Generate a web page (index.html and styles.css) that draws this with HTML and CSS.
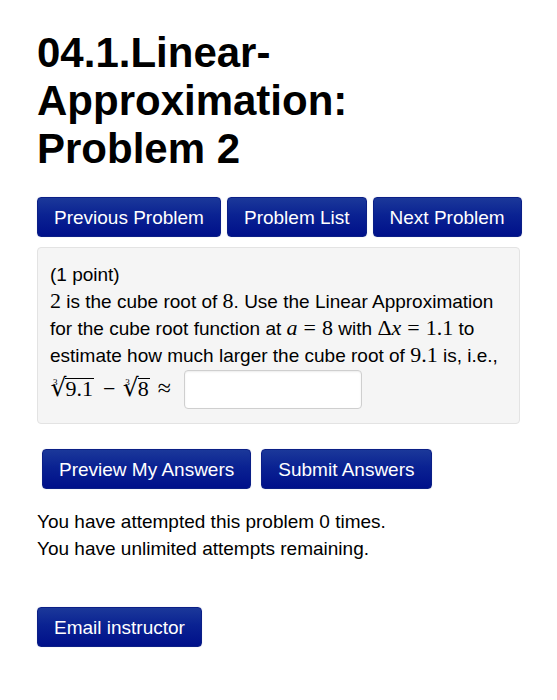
FILE: index.html
```html
<!DOCTYPE html>
<html lang="en">
<head>
<meta charset="utf-8">
<title>04.1.Linear-Approximation: Problem 2</title>
<link rel="stylesheet" href="styles.css">
</head>
<body>
<div class="page">
  <h1 class="title">04.1.Linear-Approximation: Problem 2</h1>

  <nav class="nav-row">
    <a class="btn" href="#">Previous Problem</a>
    <a class="btn" href="#">Problem List</a>
    <a class="btn" href="#">Next Problem</a>
  </nav>

  <div class="problem">
    (1 point)<br>
    <span class="m">2</span> is the cube root of <span class="m">8</span>. Use the Linear Approximation for the cube root function at <span class="m"><i>a</i><span class="rel">=</span>8</span> with <span class="m">Δ<i>x</i><span class="rel">=</span>1.1</span> to estimate how much larger the cube root of <span class="m">9.1</span> is, i.e.,<br>
    <span class="m expr"><span class="root"><span class="idx">3</span><span class="rsign">√</span><span class="rad">9.1</span></span><span class="op minus">−</span><span class="root"><span class="idx">3</span><span class="rsign">√</span><span class="rad">8</span></span><span class="op approx">≈</span></span><input class="answer" type="text" aria-label="answer">
  </div>

  <div class="submit-row">
    <button class="btn" type="button">Preview My Answers</button>
    <button class="btn" type="button">Submit Answers</button>
  </div>

  <p class="attempts">You have attempted this problem 0 times.<br>You have unlimited attempts remaining.</p>

  <div class="email-row">
    <button class="btn" type="button">Email instructor</button>
  </div>
</div>
</body>
</html>
```

FILE: styles.css
```css
html, body {
  margin: 0;
  padding: 0;
  background: #fff;
}

body {
  font-family: "Liberation Sans", Arial, Helvetica, sans-serif;
  color: #000;
  font-size: 19px;
  line-height: 27px;
}

.page {
  padding: 29px 37px 40px 37px;
}

.title {
  font-size: 42px;
  line-height: 48px;
  font-weight: bold;
  margin: 0 0 24px 0;
}

.btn {
  display: inline-flex;
  align-items: center;
  justify-content: center;
  box-sizing: border-box;
  height: 40px;
  padding: 0 16px;
  border: 1px solid #0b1f86;
  border-radius: 4px;
  background: linear-gradient(to bottom, #1b389a 0%, #0a2292 45%, #00108a 100%);
  color: #fff;
  font-family: "Liberation Sans", Arial, Helvetica, sans-serif;
  font-size: 19px;
  line-height: 1;
  text-decoration: none;
  white-space: nowrap;
  cursor: pointer;
  box-shadow: 0 0 1px rgba(0, 20, 120, 0.25);
}

.nav-row {
  display: flex;
  gap: 6px;
  margin-bottom: 10px;
}

.problem {
  background: #f5f5f5;
  border: 1px solid #e3e3e3;
  border-radius: 4px;
  padding: 13px 12px 14px 12px;
}

.m {
  font-family: "Liberation Serif", "Times New Roman", serif;
  font-size: 22px;
  line-height: 1;
  white-space: nowrap;
}

.m i {
  font-style: italic;
}

.rel {
  margin: 0 6px;
}

.root {
  display: inline-block;
  white-space: nowrap;
  margin-left: 3px;
}

.idx {
  font-size: 9px;
  vertical-align: 11px;
  margin-right: -7px;
  line-height: 0;
}

.rsign {
  font-family: "DejaVu Serif", "Liberation Serif", serif;
  font-size: 25px;
  line-height: 0;
}

.rad {
  border-top: 1px solid #000;
  margin-left: -1px;
  padding-right: 1px;
  line-height: 19px;
  display: inline-block;
}

.op {
  display: inline-block;
}

.minus {
  margin: 0 7px 0 9px;
}

.approx {
  font-size: 24px;
  margin: 0 13px 0 8px;
}

.answer {
  box-sizing: border-box;
  width: 178px;
  height: 39px;
  margin: 1px 0 0 0;
  padding: 0 8px;
  border: 1px solid #cfcfcf;
  border-radius: 4px;
  background: #fff;
  font-family: "Liberation Sans", Arial, sans-serif;
  font-size: 19px;
  box-shadow: inset 0 1px 2px rgba(0, 0, 0, 0.08);
  vertical-align: baseline;
}

.submit-row {
  display: flex;
  gap: 10px;
  padding-left: 5px;
  margin-top: 25px;
}

.attempts {
  margin: 19px 0 0 0;
}

.email-row {
  margin-top: 45px;
  display: flex;
}
```
